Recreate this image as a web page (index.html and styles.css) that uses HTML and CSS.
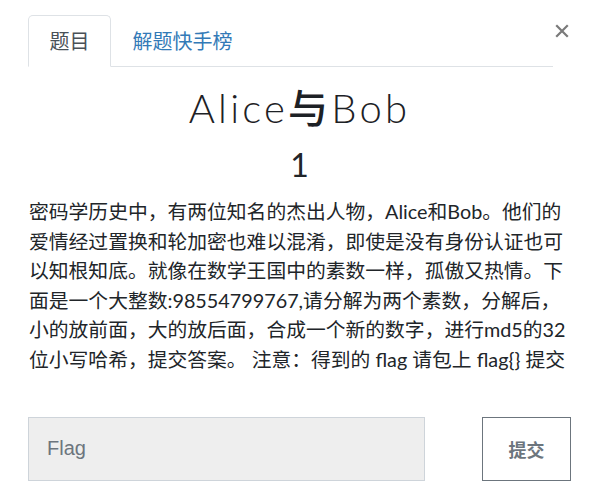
FILE: index.html
```html
<!DOCTYPE html>
<html lang="zh-CN">
<head>
<meta charset="utf-8">
<title>Alice与Bob</title>
<link rel="stylesheet" href="styles.css">
</head>
<body>
<div class="modal">
  <div class="head">
    <ul class="tabs">
      <li class="tab active">题目</li>
      <li class="tab link">解题快手榜</li>
    </ul>
    <button class="close" aria-label="关闭">
      <svg width="14" height="14" viewBox="0 0 14 14"><path d="M2 2 L12 12 M12 2 L2 12" stroke="#7a7a7a" stroke-width="2.2" stroke-linecap="square" fill="none"/></svg>
    </button>
  </div>
  <h2 class="name">Alice<span class="cjk">与</span>Bob</h2>
  <h3 class="value">1</h3>
  <p class="desc">密码学历史中，有两位知名的杰出人物，Alice和Bob。他们的爱情经过置换和轮加密也难以混淆，即使是没有身份认证也可以知根知底。就像在数学王国中的素数一样，孤傲又热情。下面是一个大整数:98554799767,请分解为两个素数，分解后，小的放前面，大的放后面，合成一个新的数字，进行md5的32位小写哈希，提交答案。 注意：得到的 flag 请包上 flag{} 提交</p>
  <form class="submit">
    <input class="flag" type="text" placeholder="Flag">
    <button class="btn" type="button">提交</button>
  </form>
</div>
</body>
</html>
```
FILE: styles.css
```css
html, body {
  margin: 0;
  padding: 0;
  background: #fff;
}
body {
  font-family: "Lato", "Noto Sans CJK SC", sans-serif;
  color: #212529;
}
.modal {
  padding: 15px 26px 0 28px;
}
.head {
  display: flex;
  align-items: flex-start;
}
.tabs {
  flex: 1;
  display: flex;
  margin: 0;
  padding: 0;
  list-style: none;
  border-bottom: 1px solid #dee2e6;
  font-family: "Noto Sans CJK SC", sans-serif;
  font-size: 20px;
}
.tab {
  height: 50px;
  line-height: 50px;
  padding: 0 20.5px;
  margin-bottom: -1px;
  border: 1px solid transparent;
  border-top-left-radius: 5px;
  border-top-right-radius: 5px;
}
.tab.active {
  color: #495057;
  border-color: #dee2e6 #dee2e6 #fff;
  background: #fff;
}
.tab.link {
  color: #337ab7;
}
.close {
  width: 18px;
  height: 30px;
  padding: 0;
  margin-top: 9px;
  border: 0;
  background: none;
  display: flex;
  justify-content: center;
}
.name {
  margin: 15px 0 0;
  text-align: center;
  font-weight: 300;
  font-size: 40px;
  line-height: 48px;
  letter-spacing: 3.2px;
  color: #1d2125;
}
.name .cjk {
  font-family: "Noto Sans CJK SC", sans-serif;
  font-weight: 500;
}
.value {
  margin: 15px 0 0;
  text-align: center;
  font-weight: 400;
  font-size: 32px;
  line-height: 36px;
}
.desc {
  margin: 14px 0 0;
  padding-left: 1px;
  font-size: 19.8px;
  line-height: 29.6px;
}
.submit {
  margin-top: 42px;
  display: flex;
  justify-content: space-between;
}
.flag {
  box-sizing: border-box;
  width: 397px;
  height: 64px;
  padding: 0 18px;
  background: #eee;
  border: 1px solid #ced4da;
  font-family: "Liberation Sans", Arial, sans-serif;
  font-size: 20px;
  color: #495057;
  outline: none;
}
.flag::placeholder {
  color: #6c757d;
}
.btn {
  box-sizing: border-box;
  width: 89px;
  height: 64px;
  background: #fff;
  border: 1px solid #6c757d;
  color: #6c757d;
  font-family: "Noto Sans CJK SC", sans-serif;
  font-weight: 700;
  font-size: 18px;
}
```
